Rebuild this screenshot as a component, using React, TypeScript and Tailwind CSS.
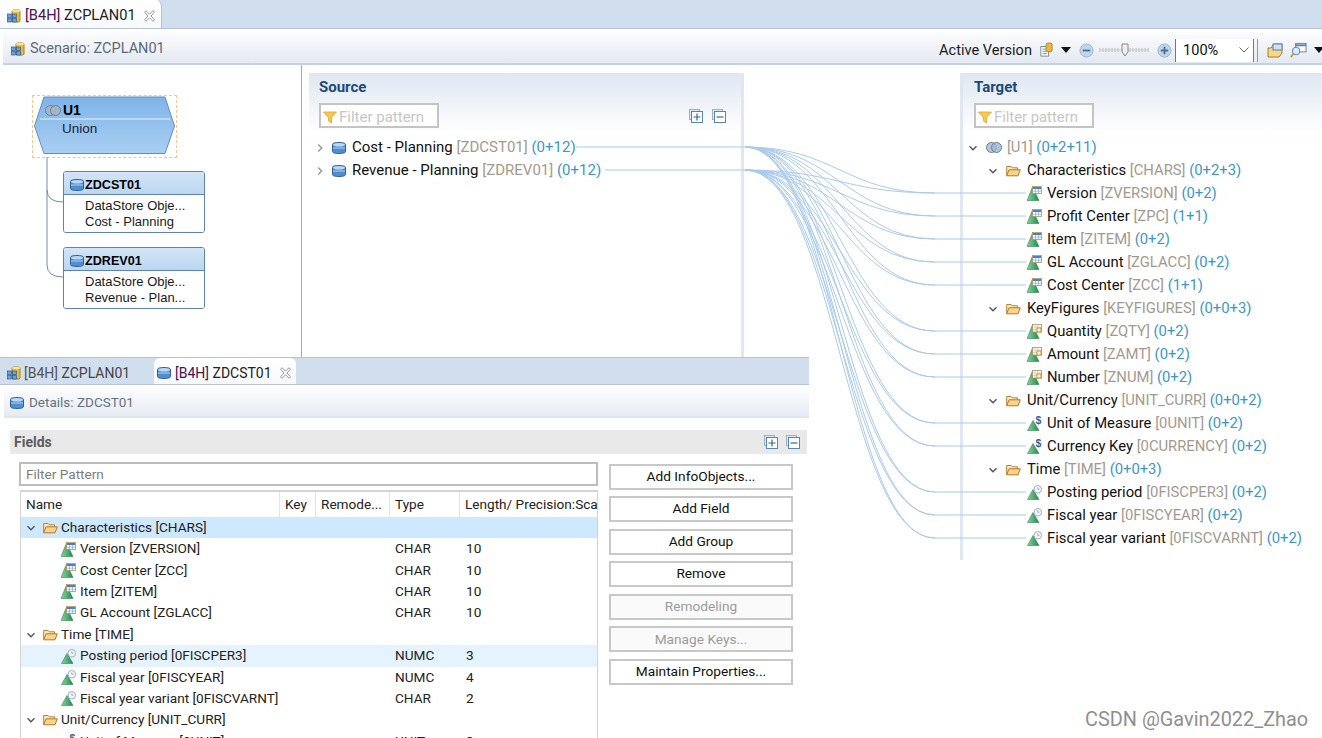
import React from "react";

const Chevron = ({ open }: { open?: boolean }) => (
  <svg width="10" height="10" viewBox="0 0 10 10" className="shrink-0" fill="none" stroke={open ? "#555" : "#999"} strokeWidth="1.4">
    {open ? <path d="M1.5 3.2 5 6.7 8.5 3.2" /> : <path d="M3.2 1.5 6.7 5 3.2 8.5" />}
  </svg>
);

const Db = ({ w = 14 }: { w?: number }) => (
  <svg width={w} height={w - 2} viewBox="0 0 14 12" className="shrink-0">
    <path d="M.5 2.5C.5 1 3.5.5 7 .5s6.500.5 6.500 2v7c0 1.500-3 2-6.500 2s-6.500-.5-6.500-2z" fill="#4f8fd0" stroke="#2f5f96" />
    <ellipse cx="7" cy="2.800" rx="6" ry="1.800" fill="#bcd8f2" />
    <rect x="1" y="5" width="12" height="2" fill="#7fb0e2" />
  </svg>
);

const Scenario = () => (
  <svg width="14" height="14" viewBox="0 0 14 14" className="shrink-0">
    <rect x="5" y="1" width="8" height="12" rx="1.500" fill="#e7b93f" stroke="#a9801f" />
    <ellipse cx="9" cy="2" rx="4" ry="1.300" fill="#f6e28c" />
    <rect x="0.500" y="5" width="4" height="3.500" fill="#6f9fd4" stroke="#2c5d98" strokeWidth=".7" />
    <rect x="5.500" y="5" width="4" height="3.500" fill="#6f9fd4" stroke="#2c5d98" strokeWidth=".7" />
    <rect x="0.500" y="9.500" width="4" height="3.500" fill="#6f9fd4" stroke="#2c5d98" strokeWidth=".7" />
    <rect x="5.500" y="9.500" width="4" height="3.500" fill="#6f9fd4" stroke="#2c5d98" strokeWidth=".7" />
  </svg>
);

const Folder = () => (
  <svg width="15" height="12" viewBox="0 0 15 12" className="shrink-0">
    <path d="M.7 10.800V1.500h4.500l1 1.300h5.300v2" fill="#fbeac0" stroke="#b5832f" />
    <path d="M.7 10.800 3 4.800h11.300L12 10.800z" fill="#f8d58a" stroke="#b5772a" />
  </svg>
);

const Funnel = () => (
  <svg width="14" height="13" viewBox="0 0 14 13" className="shrink-0">
    <path d="M.5 1h13L8.500 6.500V12L5.500 10V6.500z" fill="#f7c948" stroke="#e0a52a" strokeWidth=".8" />
  </svg>
);

const Close = () => (
  <svg width="11" height="12" viewBox="0 0 11 12" className="shrink-0" fill="#fff" stroke="#8d8d8d" strokeWidth=".9">
    <path d="M2 .7 5.500 4.200 9 .7 10.500 2.200 7 6 10.500 9.800 9 11.300 5.500 7.800 2 11.300.5 9.800 4 6 .5 2.200z" />
  </svg>
);

const Union = ({ c = "#9db8d6" }: { c?: string }) => (
  <svg width="16" height="11" viewBox="0 0 16 11" className="shrink-0">
    <ellipse cx="5.500" cy="5.500" rx="5" ry="5" fill={c} fillOpacity=".8" stroke="#6d7f95" />
    <ellipse cx="10.500" cy="5.500" rx="5" ry="5" fill={c} fillOpacity=".8" stroke="#6d7f95" />
  </svg>
);

type Kind = "char" | "kf" | "unit" | "time";

const Info = ({ kind }: { kind: Kind }) => (
  <svg width="15" height="15" viewBox="0 0 15 15" className="shrink-0">
    <defs>
      <linearGradient id="tri" x1="0" y1="0" x2="1" y2="0">
        <stop offset="0" stopColor="#8fd2a2" />
        <stop offset="1" stopColor="#1c8a4b" />
      </linearGradient>
    </defs>
    <path d={kind === "char" || kind === "kf" ? "M5.500 1 12 14.500H0z" : "M6 4.500 12 14.500H.5z"} fill="url(#tri)" stroke="#2b8a52" strokeWidth=".6" />
    {kind === "char" && (
      <g>
        <rect x="5.500" y=".5" width="9" height="7" fill="#fff" stroke="#a88f5f" strokeWidth=".8" />
        <rect x="6" y="1" width="8" height="2" fill="#4a7fcc" />
        <path d="M8.500 3v4M11.500 3v4M6 5.200h8" stroke="#8fb0de" strokeWidth=".8" />
      </g>
    )}
    {kind === "kf" && (
      <g>
        <rect x="5.500" y=".5" width="9" height="7.500" fill="#fff" stroke="#a88f5f" strokeWidth=".8" />
        <path d="M8 1v7M10.500 1v7M6 3h8M6 5.500h8" stroke="#d0c6b2" strokeWidth=".7" />
        <rect x="10" y="4" width="4" height="4" fill="#fff" stroke="#d08a10" strokeWidth="1" />
      </g>
    )}
    {kind === "unit" && (
      <text x="8.500" y="8" fontSize="10.500" fontWeight="700" fill="#3d5f8f" fontFamily="Liberation Sans">$</text>
    )}
    {kind === "time" && (
      <g>
        <circle cx="10.800" cy="4.300" r="3.800" fill="#f2f4f8" stroke="#a5aebd" />
        <path d="M10.800 2.300v2h1.700" stroke="#8a94a5" strokeWidth=".7" fill="none" />
      </g>
    )}
  </svg>
);

const ExpandIcon = ({ plus }: { plus?: boolean }) => (
  <svg width="14" height="14" viewBox="0 0 14 14" className="shrink-0">
    <rect x=".5" y=".5" width="10" height="10" fill="#dbe6f2" stroke="#9db2c9" />
    <rect x="2.500" y="2.500" width="11" height="11" fill="#fff" stroke="#5b86b0" />
    <path d={plus ? "M4.500 8h7M8 4.500v7" : "M4.500 8h7"} stroke="#2f6aa3" strokeWidth="1.200" fill="none" />
  </svg>
);

const Filter = ({ width }: { width: string }) => (
  <div className={`flex items-center gap-[2px] h-[25px] border-2 border-[#c4c4c4] bg-white pl-[2px] pt-[3px] text-[#c6c6c6] ${width}`}>
    <Funnel />
    <span>Filter pattern</span>
  </div>
);

const B = ({ t }: { t: string }) => <span className="text-[#a29a8f]">{t}</span>;
const C = ({ t }: { t: string }) => <span className="text-[#3b97c6]">{t}</span>;

const TreeRow = ({ indent, icon, name, br, cnt, chev, iconW }: { indent: string; icon: React.ReactNode; name?: string; br: string; cnt: string; chev?: boolean; iconW: string }) => (
  <div className={`flex h-[23px] items-center whitespace-nowrap ${indent}`}>
    {chev && <span className="w-[18px] shrink-0"><Chevron open /></span>}
    <span className={`flex shrink-0 items-center ${iconW}`}>{icon}</span>
    <span className="text-[#111]">
      {name ? name + " " : ""}
      <B t={br} /> <C t={cnt} />
    </span>
  </div>
);

const items: [Kind, string, string, string][] = [
  ["char", "Version", "[ZVERSION]", "(0+2)"],
  ["char", "Profit Center", "[ZPC]", "(1+1)"],
  ["char", "Item", "[ZITEM]", "(0+2)"],
  ["char", "GL Account", "[ZGLACC]", "(0+2)"],
  ["char", "Cost Center", "[ZCC]", "(1+1)"],
];

const Leaf = ({ k, n, b, c }: { k: Kind; n: string; b: string; c: string }) => (
  <TreeRow indent="pl-[64px]" iconW="w-[20px]" icon={<Info kind={k} />} name={n} br={b} cnt={c} />
);

const Group = ({ n, b, c }: { n: string; b: string; c: string }) => (
  <TreeRow indent="pl-[25px]" iconW="w-[21px]" chev icon={<Folder />} name={n} br={b} cnt={c} />
);

const ys = [193, 216, 239, 262, 285, 331, 354, 377, 423, 446, 492, 515, 538];

const Lines = () => (
  <svg width="1322" height="738" viewBox="0 0 1322 738" fill="none" className="absolute left-0 top-0">
    <g stroke="#abcaec" strokeWidth="1">
      <path d="M576 147H745" />
      <path d="M605 170H745" />
      {ys.map((y) => (
        <g key={y}>
          <path d={`M745 147C835 147 845 ${y} 935 ${y}H1026`} />
          <path d={`M745 170C835 170 845 ${y} 935 ${y}`} />
        </g>
      ))}
    </g>
  </svg>
);

const Btn = ({ t, off }: { t: string; off?: boolean }) => (
  <div className={`flex h-[26px] w-[184px] items-center justify-center border-2 border-[#c8c8c8] text-[13.700px] ${off ? "bg-[#fafafa] text-[#9a9a9a]" : "bg-white text-[#111]"}`}>{t}</div>
);

const Row = ({ ind, icon, text, type, len, bg, chev }: { ind: string; icon: React.ReactNode; text: string; type?: string; len?: string; bg?: string; chev?: boolean }) => (
  <div className={`grid h-[21.4px] shrink-0 grid-cols-[259px_36px_74px_70px_1fr] items-center whitespace-nowrap ${bg ?? ""}`}>
    <div className={`flex items-center ${ind}`}>
      {chev && <span className="w-[17px] shrink-0"><Chevron open /></span>}
      <span className={`flex shrink-0 items-center ${chev ? "w-[18px]" : "w-[19px]"}`}>{icon}</span>
      <span className="text-[#222]">{text}</span>
    </div>
    <div />
    <div />
    <div className="pl-[5px] text-[#222]">{type}</div>
    <div className="pl-[6px] text-[#222]">{len}</div>
  </div>
);

const head = "flex h-full items-center border-r border-[#e3e3e3] pl-[5px] overflow-hidden whitespace-nowrap";

export default function App() {
  return (
    <div className="relative h-[738px] w-[1322px] overflow-hidden bg-white font-['Roboto',sans-serif] text-[15px] leading-none text-[#222]">
      {/* top tab strip */}
      <div className="flex h-[29px] items-end border-b border-[#b7c3d3] bg-[#d1deee]">
        <div className="flex h-[29px] w-[162px] items-center gap-[4px] rounded-tr-[8px] border-r border-[#b7c3d3] bg-gradient-to-b from-white to-[#f7f9fc] pl-[7px] pt-[4px]">
          <Scenario />
          <span className="whitespace-nowrap text-[14.600px]"><span className="text-[#4a1050]">[B4H]</span> ZCPLAN01</span>
          <span className="ml-[4px]"><Close /></span>
        </div>
      </div>
      {/* header */}
      <div className="ml-[3px] flex h-[36px] items-center border-b-2 border-[#c3d3e4] bg-gradient-to-b from-white to-[#e3e8f1]">
        <div className="flex items-center gap-[5px] pl-[8px] pt-[6px] text-[14.500px] text-[#5c6a78]">
          <Scenario />
          <span>Scenario: ZCPLAN01</span>
        </div>
        <div className="ml-auto mr-[-2px] flex items-center pt-[8px]">
          <span className="mr-[8px] whitespace-nowrap text-[14.600px] text-[#1c1c1c]">Active Version</span>
          <svg width="13" height="18" viewBox="0 0 15 18">
            <rect x="1" y="5" width="9" height="11" fill="#fff" stroke="#6d7f95" />
            <path d="M3 8h5M3 10.500h5M3 13h5" stroke="#6d7f95" />
            <rect x="7" y="1" width="7" height="10" rx="2" fill="#e7b93f" stroke="#a9801f" />
          </svg>
          <svg width="10" height="6" viewBox="0 0 10 6" className="ml-[8px]"><path d="M0 0h10L5 6z" fill="#111" /></svg>
          <svg width="15" height="15" viewBox="0 0 16 16" className="ml-[8px]"><circle cx="8" cy="8" r="7" fill="#bcd6ef" stroke="#9fb4c9" /><path d="M4 8h8" stroke="#52708f" strokeWidth="2" /></svg>
          <svg width="52" height="14" viewBox="0 0 52 14" className="ml-[5px]">
            <path d="M1 5v4M4 5v4M7 5v4M10 5v4M13 5v4M16 5v4M19 5v4M31 5v4M34 5v4M37 5v4M40 5v4M43 5v4M46 5v4M49 5v4" stroke="#bbb" />
            <path d="M2 7h48" stroke="#ccc" />
            <path d="M23 1h6v8l-3 4-3-4z" fill="#eee" stroke="#888" />
          </svg>
          <svg width="15" height="15" viewBox="0 0 16 16" className="ml-[6px]"><circle cx="8" cy="8" r="7" fill="#bcd6ef" stroke="#9fb4c9" /><path d="M4 8h8M8 4v8" stroke="#52708f" strokeWidth="2" /></svg>
          <div className="ml-[3px] flex h-[23px] w-[79px] items-center border-x border-[#777] bg-white pl-[7px] text-[14.600px] text-[#111]">
            100%
            <svg width="10" height="6" viewBox="0 0 10 6" className="ml-auto mr-[4px]" fill="none" stroke="#666"><path d="M.5.5 5 5 9.500.5" /></svg>
          </div>
          <div className="ml-[3px] h-[23px] w-px bg-[#999]" />
          <svg width="16" height="15" viewBox="0 0 16 15" className="ml-[9px]"><path d="M1 14V5h3l3-4h8v9l-3 4z" fill="#f8d58a" stroke="#a9801f" /><rect x="6" y="1" width="9" height="6" fill="#cfe0f2" stroke="#5b7fa8" /></svg>
          <svg width="17" height="17" viewBox="0 0 18 17" className="ml-[7px]"><rect x="6" y="1" width="11" height="9" fill="#fff" stroke="#5b7fa8" /><path d="M6 3h11" stroke="#5b7fa8" strokeWidth="2" /><circle cx="6.500" cy="9" r="4" fill="#dcebf8" stroke="#4f7fae" /><path d="M3.500 12 1 15.500" stroke="#c99a2a" strokeWidth="2" /></svg>
          <svg width="10" height="6" viewBox="0 0 10 6" className="ml-[7px]"><path d="M0 0h10L5 6z" fill="#111" /></svg>
        </div>
      </div>

      {/* body */}
      <div className="flex h-[673px]">
        <div className="flex w-[809px] shrink-0 flex-col">
          <div className="flex h-[292px] shrink-0">
            {/* diagram canvas */}
            <div className="relative w-[302px] shrink-0 border-r border-[#a8a8a8] font-['Liberation_Sans',sans-serif] text-[13px]">
              <div className="absolute left-[32px] top-[30px] h-[63px] w-[145px] border border-dashed border-[#f6c68a]" />
              <svg width="150" height="70" viewBox="0 0 150 70" className="absolute left-[30px] top-[28px]">
                <defs>
                  <linearGradient id="hex" x1="0" y1="0" x2="0" y2="1">
                    <stop offset="0" stopColor="#7fb4e8" />
                    <stop offset="1" stopColor="#a9cff2" />
                  </linearGradient>
                </defs>
                <path d="M14 4H135L144.500 33 135 60.500H14L4.500 33z" fill="url(#hex)" stroke="#6b8cb3" />
                <path d="M10 26H140" stroke="#e8f2fb" strokeWidth="1.200" />
              </svg>
              <div className="absolute left-[45px] top-[38px] flex items-center gap-[2px] text-[14px] font-bold text-black">
                <Union c="#a9b7c6" />
                <span>U1</span>
              </div>
              <div className="absolute left-[62px] top-[57px] text-[13.500px] text-[#10243c]">Union</div>
              <svg width="30" height="125" viewBox="0 0 30 125" fill="none" className="absolute left-[40px] top-[92px]" stroke="#6f8db0">
                <path d="M7 0V33Q7 45 23 45" />
                <path d="M7 33V108Q7 120 23 120" />
              </svg>
              {[
                { top: "top-[106px]", n: "ZDCST01", a: "DataStore Obje...", b: "Cost - Planning" },
                { top: "top-[182px]", n: "ZDREV01", a: "DataStore Obje...", b: "Revenue - Plan..." },
              ].map((d) => (
                <div key={d.n} className={`absolute left-[63px] w-[142px] overflow-hidden rounded-[3px] border border-[#5f84ac] ${d.top}`}>
                  <div className="flex h-[23px] items-center gap-px border-b border-[#5f84ac] bg-gradient-to-b from-[#d3e5f7] to-[#bcd6f1] pl-[6px] pt-[4px] text-[12.600px] font-bold text-black">
                    <Db w={14} />
                    <span>{d.n}</span>
                  </div>
                  <div className="flex h-[37px] flex-col justify-center gap-[3px] bg-white pl-[21px] text-[#1a1a1a]">
                    <span>{d.a}</span>
                    <span>{d.b}</span>
                  </div>
                </div>
              ))}
            </div>
            {/* source */}
            <div className="ml-[7px] mt-[8px] flex h-[284px] w-[435px] shrink-0 flex-col border-r-[3px] border-[#dfe7f2]">
              <div className="h-[60px] bg-gradient-to-b from-[#dfe7f2] to-white px-[10px]">
                <div className="pt-[7px] font-bold text-[#1b4a76]">Source</div>
                <div className="mt-[8px] flex items-center justify-between pr-[5px]">
                  <Filter width="w-[120px]" />
                  <div className="flex gap-[9px]"><ExpandIcon plus /><ExpandIcon /></div>
                </div>
              </div>
              <div className="mt-[3px] pl-[6px]">
                {[
                  ["Cost - Planning", "[ZDCST01]"],
                  ["Revenue - Planning", "[ZDREV01]"],
                ].map(([n, b]) => (
                  <div key={n} className="flex h-[23px] items-center whitespace-nowrap">
                    <span className="w-[17px] shrink-0"><Chevron /></span>
                    <span className="w-[20px] shrink-0"><Db /></span>
                    <span className="text-[#111]">{n} <B t={b} /> <C t="(0+12)" /></span>
                  </div>
                ))}
              </div>
            </div>
          </div>

          {/* details panel */}
          <div className="flex min-h-0 flex-1 flex-col overflow-hidden">
            <div className="flex h-[28px] shrink-0 items-end border-y border-[#b7c3d3] bg-[#d1deee] text-[14px]">
              <div className="flex h-full w-[154px] items-center gap-[3px] pl-[7px] pt-[3px] text-[#444]">
                <Scenario />
                <span className="whitespace-nowrap"><span className="text-[#555]">[B4H]</span> ZCPLAN01</span>
              </div>
              <div className="flex h-full w-[142px] items-center gap-[4px] rounded-t-[6px] bg-gradient-to-b from-white to-[#f6f8fb] pl-[3px] pt-[3px]">
                <Db />
                <span className="whitespace-nowrap"><span className="text-[#4a1050]">[B4H]</span> ZDCST01</span>
                <span className="ml-[4px]"><Close /></span>
              </div>
            </div>
            <div className="ml-[4px] flex h-[33px] shrink-0 items-center gap-[5px] border-b-2 border-[#dde5ef] bg-gradient-to-b from-white to-[#e6ebf3] pl-[6px] pt-[5px] text-[13.500px] text-[#66727f]">
              <Db />
              <span>Details: ZDCST01</span>
            </div>
            <div className="ml-[10px] mr-[2px] mt-[12px] flex h-[24px] shrink-0 items-center justify-between bg-[#e9e9e9] pl-[4px] pr-[7px]">
              <span className="text-[14px] font-bold text-[#5d5d5d]">Fields</span>
              <div className="flex gap-[8px]"><ExpandIcon plus /><ExpandIcon /></div>
            </div>
            <div className="ml-[19px] mt-[8px] flex min-h-0 flex-1 gap-[11px]">
              <div className="flex w-[579px] shrink-0 flex-col">
                <div className="flex h-[24px] shrink-0 items-center border-2 border-[#bdbdbd] pl-[5px] pt-[2px] text-[13.600px] text-[#7d7d7d]">Filter Pattern</div>
                <div className="ml-px mt-[4px] flex min-h-0 flex-1 flex-col overflow-hidden border-x border-t-2 border-[#d4d4d4] text-[13.600px]">
                  <div className="grid h-[25px] shrink-0 grid-cols-[259px_36px_74px_70px_1fr] items-center text-[#222]">
                    <div className={head}>Name</div>
                    <div className={head}>Key</div>
                    <div className={head}>Remode...</div>
                    <div className={head}>Type</div>
                    <div className="flex h-full items-center overflow-hidden whitespace-nowrap pl-[5px]">Length/ Precision:Scale</div>
                  </div>
                  <Row chev ind="pl-[5px]" bg="bg-[#cde8ff]" icon={<Folder />} text="Characteristics [CHARS]" />
                  <Row ind="pl-[40px]" icon={<Info kind="char" />} text="Version [ZVERSION]" type="CHAR" len="10" />
                  <Row ind="pl-[40px]" icon={<Info kind="char" />} text="Cost Center [ZCC]" type="CHAR" len="10" />
                  <Row ind="pl-[40px]" icon={<Info kind="char" />} text="Item [ZITEM]" type="CHAR" len="10" />
                  <Row ind="pl-[40px]" icon={<Info kind="char" />} text="GL Account [ZGLACC]" type="CHAR" len="10" />
                  <Row chev ind="pl-[5px]" icon={<Folder />} text="Time [TIME]" />
                  <Row ind="pl-[40px]" bg="bg-[#e5f3ff]" icon={<Info kind="time" />} text="Posting period [0FISCPER3]" type="NUMC" len="3" />
                  <Row ind="pl-[40px]" icon={<Info kind="time" />} text="Fiscal year [0FISCYEAR]" type="NUMC" len="4" />
                  <Row ind="pl-[40px]" icon={<Info kind="time" />} text="Fiscal year variant [0FISCVARNT]" type="CHAR" len="2" />
                  <Row chev ind="pl-[5px]" icon={<Folder />} text="Unit/Currency [UNIT_CURR]" />
                  <Row ind="pl-[40px]" icon={<Info kind="unit" />} text="Unit of Measure [0UNIT]" type="UNIT" len="3" />
                </div>
              </div>
              <div className="flex shrink-0 flex-col gap-[6.600px] pt-[1.500px]">
                <Btn t="Add InfoObjects..." />
                <Btn t="Add Field" />
                <Btn t="Add Group" />
                <Btn t="Remove" />
                <Btn t="Remodeling" off />
                <Btn t="Manage Keys..." off />
                <Btn t="Maintain Properties..." />
              </div>
            </div>
          </div>
        </div>

        {/* target */}
        <div className="ml-[151px] mt-[8px] flex h-[487px] flex-1 flex-col border-l-[3px] border-[#dfe7f2] text-[14.800px]">
          <div className="h-[60px] shrink-0 bg-gradient-to-b from-[#dfe7f2] to-white pl-[11px]">
            <div className="pt-[7px] text-[15px] font-bold text-[#1b4a76]">Target</div>
            <div className="mt-[8px]"><Filter width="w-[120px]" /></div>
          </div>
          <div className="mt-[3px]">
            <div className="flex h-[23px] items-center whitespace-nowrap pl-[5px]">
              <span className="w-[18px] shrink-0"><Chevron open /></span>
              <span className="w-[21px] shrink-0"><Union /></span>
              <span><B t="[U1]" /> <C t="(0+2+11)" /></span>
            </div>
            <Group n="Characteristics" b="[CHARS]" c="(0+2+3)" />
            {items.map(([k, n, b, c]) => <Leaf key={n} k={k} n={n} b={b} c={c} />)}
            <Group n="KeyFigures" b="[KEYFIGURES]" c="(0+0+3)" />
            <Leaf k="kf" n="Quantity" b="[ZQTY]" c="(0+2)" />
            <Leaf k="kf" n="Amount" b="[ZAMT]" c="(0+2)" />
            <Leaf k="kf" n="Number" b="[ZNUM]" c="(0+2)" />
            <Group n="Unit/Currency" b="[UNIT_CURR]" c="(0+0+2)" />
            <Leaf k="unit" n="Unit of Measure" b="[0UNIT]" c="(0+2)" />
            <Leaf k="unit" n="Currency Key" b="[0CURRENCY]" c="(0+2)" />
            <Group n="Time" b="[TIME]" c="(0+0+3)" />
            <Leaf k="time" n="Posting period" b="[0FISCPER3]" c="(0+2)" />
            <Leaf k="time" n="Fiscal year" b="[0FISCYEAR]" c="(0+2)" />
            <Leaf k="time" n="Fiscal year variant" b="[0FISCVARNT]" c="(0+2)" />
          </div>
        </div>
      </div>

      <Lines />
      <div className="absolute left-[1085px] top-[710px] text-[19.900px] text-[#8f8f8f]">CSDN @Gavin2022_Zhao</div>
    </div>
  );
}
